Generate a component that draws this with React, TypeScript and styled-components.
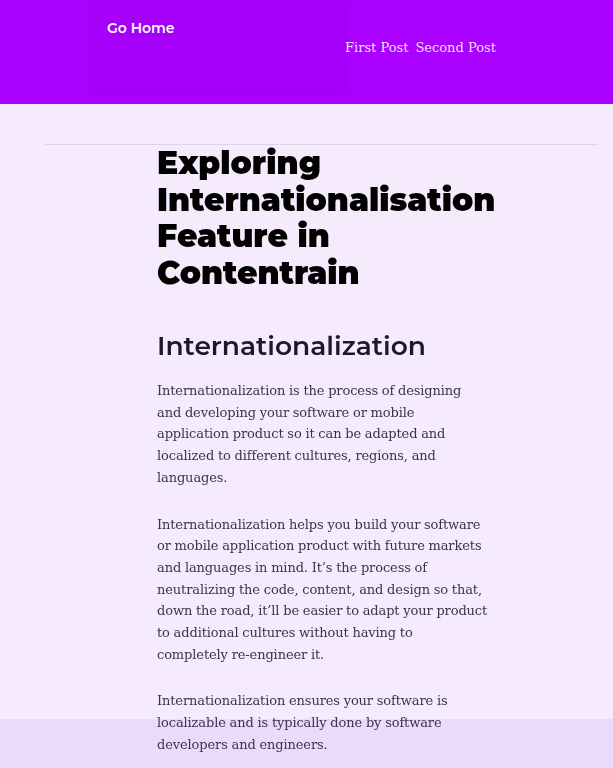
import styled, { createGlobalStyle } from "styled-components";

const GlobalStyle = createGlobalStyle`
  html, body {
    margin: 0;
    padding: 0;
    background-color: #f5ebfd;
  }

  body {
    font-family: "DejaVu Serif", serif;
  }
`;

const Page = styled.div`
  min-height: 768px;
  background-color: #f5ebfd;
`;

const Header = styled.header`
  display: flex;
  flex-direction: row;
  height: 104px;
  background-color: #aa00ff;
  padding-left: 93px;
`;

const Brand = styled.div`
  width: 250px;
  height: 92px;
  padding: 18px 14px 0;
  box-sizing: border-box;
  background-color: #a700fa;
  box-shadow: 0 2px 6px rgba(80, 0, 130, 0.2);
`;

const BrandLink = styled.a`
  font-family: "Montserrat", "Inter", sans-serif;
  font-weight: 600;
  font-size: 14px;
  color: #ffffff;
  text-decoration: none;
`;

const Nav = styled.nav`
  display: flex;
  flex-direction: row;
  gap: 7px;
  padding-top: 40px;
  padding-left: 2px;
`;

const NavLink = styled.a`
  font-family: "DejaVu Serif", serif;
  font-size: 13px;
  color: #f6ddff;
  text-decoration: none;
`;

const Main = styled.main`
  position: relative;
  z-index: 1;
  margin: 40px 15px 0 45px;
  border-top: 1px solid #ddd2e6;
`;

const Article = styled.article`
  width: 332px;
  margin-left: 112px;
`;

const Title = styled.h1`
  margin: 0;
  font-family: "Montserrat", "Inter", sans-serif;
  font-weight: 900;
  font-size: 31.4px;
  line-height: 36.5px;
  color: #000000;
`;

const Heading = styled.h2`
  margin: 37px 0 16px;
  font-family: "Montserrat", "Inter", sans-serif;
  font-weight: 600;
  font-size: 26.5px;
  line-height: 36px;
  color: #1b1a2b;
`;

const Paragraph = styled.p`
  margin: 0 0 25px;
  font-family: "DejaVu Serif", serif;
  font-size: 13px;
  line-height: 21.7px;
  letter-spacing: -0.12px;
  word-spacing: -0.2px;
  color: #3a3450;
`;

const Footer = styled.div`
  position: fixed;
  left: 0;
  right: 0;
  bottom: 0;
  height: 49px;
  background-color: #ecdafd;
`;

const App = () => {
  return (
    <Page>
      <GlobalStyle />
      <Header>
        <Brand>
          <BrandLink href="#">Go Home</BrandLink>
        </Brand>
        <Nav>
          <NavLink href="#">First Post</NavLink>
          <NavLink href="#">Second Post</NavLink>
        </Nav>
      </Header>
      <Main>
        <Article>
          <Title>Exploring Internationalisation Feature in Contentrain</Title>
          <Heading>Internationalization</Heading>
          <Paragraph>
            Internationalization is the process of designing and developing
            your software or mobile application product so it can be adapted
            and localized to different cultures, regions, and languages.
          </Paragraph>
          <Paragraph>
            Internationalization helps you build your software or mobile
            application product with future markets and languages in mind.
            It’s the process of neutralizing the code, content, and design so
            that, down the road, it’ll be easier to adapt your product to
            additional cultures without having to completely&nbsp;re-engineer
            it.
          </Paragraph>
          <Paragraph>
            Internationalization ensures your software is localizable and is
            typically done by software developers and engineers.
          </Paragraph>
        </Article>
      </Main>
      <Footer />
    </Page>
  );
};

export default App;
